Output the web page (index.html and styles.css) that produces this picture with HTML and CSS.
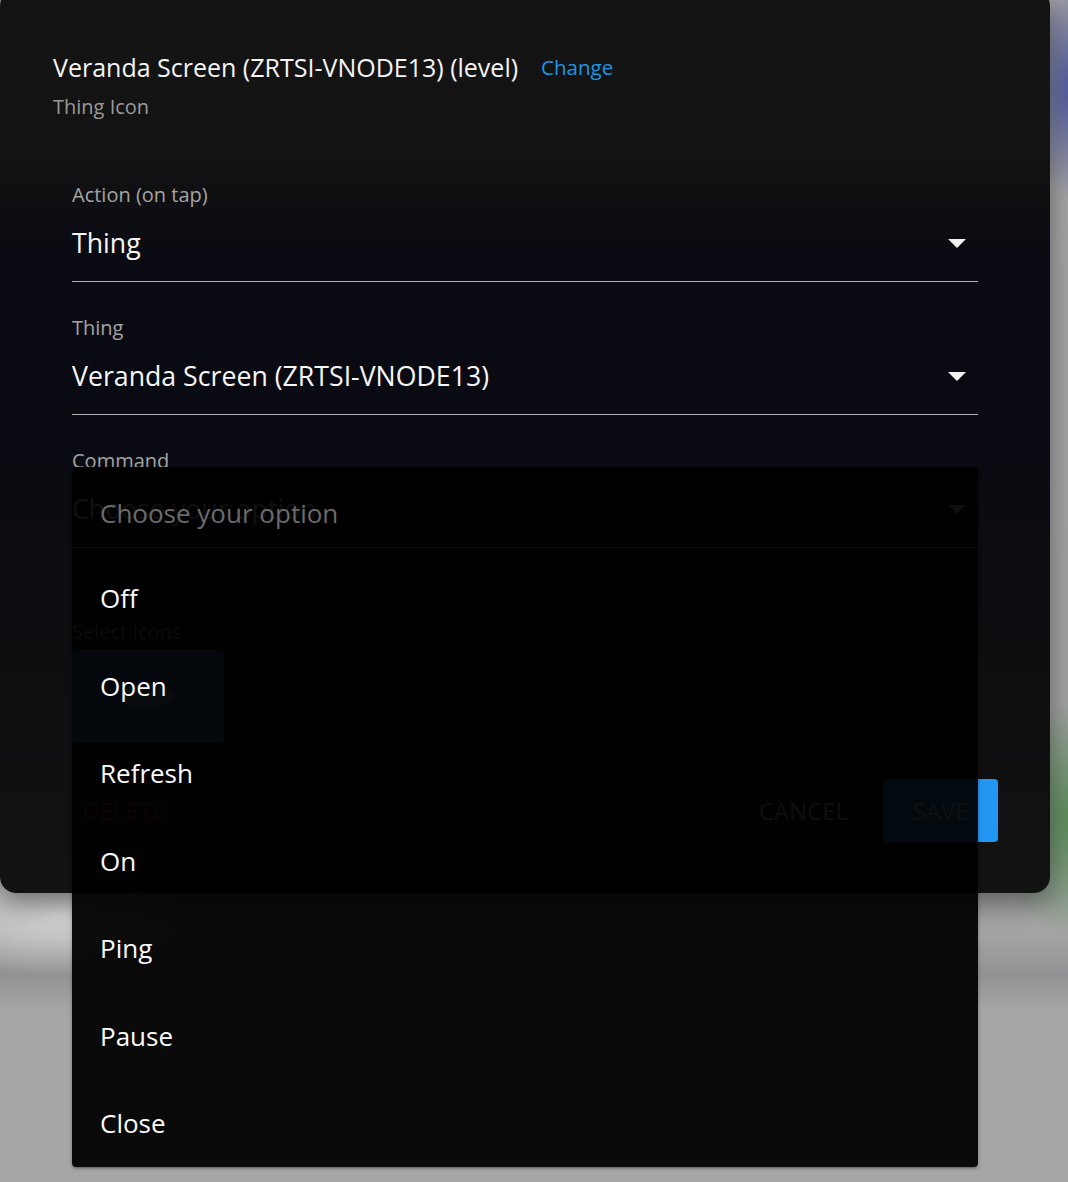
FILE: index.html
```html
<!DOCTYPE html>
<html lang="en">
<head>
<meta charset="utf-8">
<title>Edit Thing Icon</title>
<link rel="stylesheet" href="styles.css">
</head>
<body>
<div class="page">
  <div class="dialog">
    <div class="head">
      <span class="title">Veranda Screen (ZRTSI-VNODE13) (level)</span>
      <a class="change" href="#">Change</a>
    </div>
    <div class="subtitle">Thing Icon</div>

    <div class="form">
      <div class="field">
        <label class="lbl">Action (on tap)</label>
        <div class="select"><span class="val">Thing</span><span class="caret"></span></div>
      </div>
      <div class="field">
        <label class="lbl">Thing</label>
        <div class="select"><span class="val">Veranda Screen (ZRTSI-VNODE13)</span><span class="caret"></span></div>
      </div>
      <div class="field cmd">
        <label class="lbl">Command</label>
        <div class="select"><span class="val">Choose your option</span><span class="caret"></span></div>
        <ul class="menu">
          <li class="disabled">Choose your option</li>
          <li>Off</li>
          <li>Open</li>
          <li>Refresh</li>
          <li>On</li>
          <li>Ping</li>
          <li>Pause</li>
          <li>Close</li>
        </ul>
      </div>
      <div class="icons-lbl">Select Icons</div>
      <div class="icons">
        <div class="tile">
          <svg width="70" height="40" viewBox="0 0 70 40"><path d="M8 20c6-14 28-16 42-8l12 8-12 8c-14 8-36 6-42-8z" fill="#9fb3c8"/></svg>
        </div>
      </div>
    </div>

    <div class="footer">
      <button class="btn del">DELETE</button>
      <span class="spacer"></span>
      <button class="btn cancel">CANCEL</button>
      <button class="btn save">SAVE</button>
    </div>
  </div>
</div>
</body>
</html>
```

FILE: styles.css
```css
html, body {
  margin: 0;
  padding: 0;
}
body {
  width: 1068px;
  height: 1182px;
  overflow: hidden;
  font-family: "Open Sans", "Noto Sans", sans-serif;
  background:
    radial-gradient(ellipse 50px 110px at 1075px 90px, rgba(70, 80, 160, 0.95), rgba(70, 80, 160, 0) 100%),
    radial-gradient(ellipse 90px 120px at 1080px 820px, rgba(80, 140, 80, 0.95), rgba(80, 140, 80, 0) 100%),
    radial-gradient(ellipse 160px 60px at 60px 915px, rgba(215, 215, 215, 1), rgba(215, 215, 215, 0) 100%),
    linear-gradient(180deg, #a8a8a8 0, #a6a6a6 930px, #929296 975px, #a6a6a6 1010px, #a6a6a6 100%);
}
.page {
  position: relative;
}
.dialog {
  position: relative;
  width: 1050px;
  box-sizing: border-box;
  margin-top: -10px;
  padding: 61px 52px 51px 53px;
  border-radius: 16px;
  background: linear-gradient(180deg, #141414 0, #131313 160px, #0a0b12 270px, #0a0b12 450px, #0e0e11 650px, #121212 903px);
  box-shadow: 0 10px 30px rgba(0, 0, 0, 0.45);
}
.head {
  display: flex;
  align-items: center;
  height: 32px;
}
.title {
  font-size: 25px;
  line-height: 32px;
  color: #f4f4f4;
}
.change {
  margin-left: 23px;
  font-size: 20.5px;
  color: #1e96e6;
  text-decoration: none;
  line-height: 32px;
}
.subtitle {
  margin-top: 10px;
  font-size: 20px;
  line-height: 28px;
  color: #9a9a9a;
}
.form {
  margin-top: 60px;
  padding: 0 20px 0 19px;
}
.field {
  position: relative;
  display: flex;
  flex-direction: column;
  gap: 13px;
}
.field + .field {
  margin-top: 32px;
}
.lbl {
  font-size: 20px;
  line-height: 28px;
  color: #a4a4a4;
}
.select {
  display: flex;
  align-items: center;
  justify-content: space-between;
  height: 42px;
  padding-bottom: 17px;
  border-bottom: 1px solid #b4b4b4;
}
.val {
  font-size: 26.7px;
  line-height: 42px;
  color: #f6f6f6;
}
.caret {
  width: 0;
  height: 0;
  margin-right: 12px;
  border-left: 9px solid transparent;
  border-right: 9px solid transparent;
  border-top: 9px solid #f0f0f0;
}
.cmd .val {
  color: #fff;
}
.menu {
  position: absolute;
  z-index: 10;
  top: 20px;
  left: 0;
  right: 0;
  height: 700px;
  margin: 0;
  padding: 0;
  list-style: none;
  border-radius: 4px;
  background: rgba(0, 0, 0, 0.94);
  box-shadow: 0 2px 2px rgba(0, 0, 0, 0.14), 0 3px 1px -2px rgba(0, 0, 0, 0.12), 0 1px 5px rgba(0, 0, 0, 0.2);
}
.menu li {
  display: flex;
  align-items: center;
  height: 87.5px;
  padding-left: 28px;
  font-size: 26px;
  color: #fafafa;
}
.menu li.disabled {
  color: #6b6b6b;
  padding-top: 4px;
  box-sizing: border-box;
}
.icons-lbl {
  margin-top: 70px;
  font-size: 20px;
  line-height: 28px;
  color: #a4a4a4;
}
.icons {
  display: flex;
  margin-top: 3px;
}
.tile {
  width: 152px;
  height: 94px;
  border-radius: 4px;
  background: #4a7eb0;
  display: flex;
  align-items: center;
  justify-content: center;
}
.footer {
  display: flex;
  align-items: center;
  margin-top: 36px;
  height: 63px;
}
.spacer {
  flex: 1;
}
.btn {
  font-family: inherit;
  font-size: 24px;
  border: none;
  background: none;
  height: 63px;
  padding: 0 29px;
  border-radius: 4px;
  cursor: pointer;
}
.del {
  padding-left: 29px;
  color: #c0392f;
}
.cancel {
  color: #e0e0e0;
  margin-right: 6px;
}
.save {
  background: #2196f3;
  color: #ffffff;
  width: 115px;
}
```
